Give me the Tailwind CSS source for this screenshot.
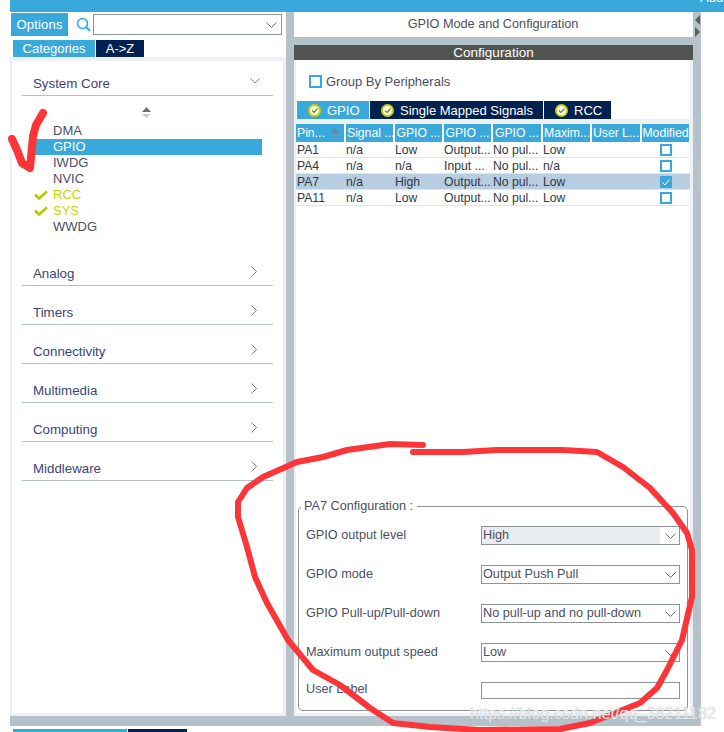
<!DOCTYPE html>
<html>
<head>
<meta charset="utf-8">
<script src="https://cdn.jsdelivr.net/npm/@tailwindcss/browser@4"></script>
</head>
<body class="bg-white">
<div class="relative w-[724px] h-[732px] overflow-hidden bg-white pl-[10px] font-['Liberation_Sans',Arial,sans-serif] text-[13px] text-[#4a4f63]">
  <!-- top bar -->
  <div class="h-[12px] bg-[#39a9dc] relative overflow-hidden">
    <span class="absolute left-[690px] top-[-12px] text-white text-[13px]">Add</span>
  </div>
  <!-- main -->
  <div class="flex h-[704px] w-[691px]">
    <!-- left -->
    <div class="w-[276px] flex flex-col">
      <div class="h-[45px] relative">
        <div class="flex items-center pl-[1px] pt-[1px]">
          <div class="w-[57px] h-[23px] bg-[#39a9dc] text-white flex items-center justify-center tracking-[0.2px]">Options</div>
          <svg class="ml-[8px] w-[15px] h-[15px]" viewBox="0 0 15 15" fill="none" stroke="#39a9dc" stroke-width="1.6"><circle cx="6.5" cy="6.5" r="5"/><path d="M10 10l4 4" stroke-width="2"/></svg>
          <div class="ml-[2px] w-[189px] h-[21px] border border-[#8e9399] bg-white flex items-center justify-end pr-[4px]">
            <svg class="w-[11px] h-[6px]" viewBox="0 0 11 6" fill="none" stroke="#6b7075"><path d="M.5.5l5 5 5-5"/></svg>
          </div>
        </div>
        <div class="flex pl-[3px] mt-[4px] gap-[1px]">
          <div class="w-[82px] h-[17px] bg-[#39a9dc] text-white flex items-center justify-center">Categories</div>
          <div class="w-[48px] h-[17px] bg-[#002050] text-white flex items-center justify-center">A-&gt;Z</div>
        </div>
      </div>
      <div class="flex-1 bg-[#eef0f3] pl-[2px] pr-[3px] pt-[4px] pb-[3px]">
        <div class="h-full bg-white px-[10px] text-[#3a4478] text-[13.3px]">
          <div class="h-[35px] flex items-end justify-between border-b border-[#b6c2ca] pb-[1px] pl-[11px] pr-[13px] relative">
            <span>System Core</span>
            <svg class="w-[10px] h-[6px] mb-[10px]" viewBox="0 0 10 6" fill="none" stroke="#7b8085"><path d="M.5.5l4.5 4.5 4.5-4.5"/></svg>
          </div>
          <div class="h-[151px] relative text-[13px]">
            <div class="flex justify-center pt-[11px] h-[27px] pr-[3px]">
              <svg class="w-[9px] h-[12px]" viewBox="0 0 9 12"><path d="M4.500 0L9 5H0z" fill="#6b7075"/><path d="M4.500 11L9 7H0z" fill="#c5c9cd"/></svg>
            </div>
            <div class="flex flex-col text-[#4a4f63] -ml-[10px]">
              <div class="h-[16px] pl-[41px] leading-[16px]">DMA</div>
              <div class="h-[16px] ml-[23px] w-[227px] pl-[18px] leading-[16px] bg-[#39a9dc] text-white">GPIO</div>
              <div class="h-[16px] pl-[41px] leading-[16px]">IWDG</div>
              <div class="h-[16px] pl-[41px] leading-[16px]">NVIC</div>
              <div class="h-[16px] pl-[22px] flex items-center text-[#c4d600]">
                <svg class="w-[14px] h-[10px] mr-[5px]" viewBox="0 0 14 10" fill="none" stroke="#b4c800" stroke-width="2.500"><path d="M1 4.500l4 4 8-7"/></svg>RCC</div>
              <div class="h-[16px] pl-[22px] flex items-center text-[#c4d600]">
                <svg class="w-[14px] h-[10px] mr-[5px]" viewBox="0 0 14 10" fill="none" stroke="#b4c800" stroke-width="2.500"><path d="M1 4.500l4 4 8-7"/></svg>SYS</div>
              <div class="h-[16px] pl-[41px] leading-[16px]">WWDG</div>
            </div>
          </div>
          <div class="h-[39px] flex items-end justify-between border-b border-[#b6c2ca] pb-[1px] pl-[11px] pr-[16px]"><span>Analog</span><svg class="w-[6px] h-[11px] mb-[7px]" viewBox="0 0 6 11" fill="none" stroke="#7b8085"><path d="M.5.5l5 5-5 5"/></svg></div>
          <div class="h-[39px] flex items-end justify-between border-b border-[#b6c2ca] pb-[1px] pl-[11px] pr-[16px]"><span>Timers</span><svg class="w-[6px] h-[11px] mb-[7px]" viewBox="0 0 6 11" fill="none" stroke="#7b8085"><path d="M.5.5l5 5-5 5"/></svg></div>
          <div class="h-[39px] flex items-end justify-between border-b border-[#b6c2ca] pb-[1px] pl-[11px] pr-[16px]"><span>Connectivity</span><svg class="w-[6px] h-[11px] mb-[7px]" viewBox="0 0 6 11" fill="none" stroke="#7b8085"><path d="M.5.5l5 5-5 5"/></svg></div>
          <div class="h-[39px] flex items-end justify-between border-b border-[#b6c2ca] pb-[1px] pl-[11px] pr-[16px]"><span>Multimedia</span><svg class="w-[6px] h-[11px] mb-[7px]" viewBox="0 0 6 11" fill="none" stroke="#7b8085"><path d="M.5.5l5 5-5 5"/></svg></div>
          <div class="h-[39px] flex items-end justify-between border-b border-[#b6c2ca] pb-[1px] pl-[11px] pr-[16px]"><span>Computing</span><svg class="w-[6px] h-[11px] mb-[7px]" viewBox="0 0 6 11" fill="none" stroke="#7b8085"><path d="M.5.5l5 5-5 5"/></svg></div>
          <div class="h-[39px] flex items-end justify-between border-b border-[#b6c2ca] pb-[1px] pl-[11px] pr-[16px]"><span>Middleware</span><svg class="w-[6px] h-[11px] mb-[7px]" viewBox="0 0 6 11" fill="none" stroke="#7b8085"><path d="M.5.5l5 5-5 5"/></svg></div>
        </div>
      </div>
    </div>
    <!-- separator -->
    <div class="w-[8px] bg-[#b6c2ca]"></div>
    <!-- right -->
    <div class="w-[399px] flex flex-col bg-[#b6c2ca]">
      <div class="h-[25px] bg-white flex items-center justify-center text-[12.7px] pt-[1px] pr-[1px]">GPIO Mode and Configuration</div>
      <div class="h-[8px]"></div>
      <div class="h-[15px] bg-[#525452] text-white flex items-center justify-center text-[13.5px] pt-[1px]">Configuration</div>
      <div class="flex-1 bg-white border-x-2 border-b-3 border-[#eef0f3] border-r-3 flex flex-col relative">
        <div class="h-[41px] flex items-center pl-[13px] pt-[2px]">
          <div class="w-[13px] h-[13px] border-2 border-[#39a9dc] mr-[4px]"></div>
          <span>Group By Peripherals</span>
        </div>
        <div class="flex pl-[1px] gap-[1px] h-[18px] text-[13px]">
          <div class="w-[72px] bg-[#39a9dc] text-white flex items-center pl-[11px] gap-[6px]">
            <svg class="w-[13px] h-[13px]" viewBox="0 0 13 13"><circle cx="6.500" cy="6.500" r="5.500" fill="#fff" stroke="#c4d600" stroke-width="2"/><path d="M4 6.500l2 2 3.500-4" fill="none" stroke="#7a8a20" stroke-width="1.300"/></svg><span class="pt-[1px]">GPIO</span></div>
          <div class="w-[173px] bg-[#002050] text-white flex items-center pl-[11px] gap-[6px]">
            <svg class="w-[13px] h-[13px]" viewBox="0 0 13 13"><circle cx="6.500" cy="6.500" r="5.500" fill="#fff" stroke="#c4d600" stroke-width="2"/><path d="M4 6.500l2 2 3.500-4" fill="none" stroke="#7a8a20" stroke-width="1.300"/></svg><span class="pt-[1px]">Single Mapped Signals</span></div>
          <div class="w-[67px] bg-[#002050] text-white flex items-center pl-[11px] gap-[6px]">
            <svg class="w-[13px] h-[13px]" viewBox="0 0 13 13"><circle cx="6.500" cy="6.500" r="5.500" fill="#fff" stroke="#c4d600" stroke-width="2"/><path d="M4 6.500l2 2 3.500-4" fill="none" stroke="#7a8a20" stroke-width="1.300"/></svg><span class="pt-[1px]">RCC</span></div>
        </div>
        <div class="h-[5px] bg-[#eef0f3] -mr-[1px]"></div>
        <!-- table -->
        <div class="w-[394px] text-[12.2px] text-[#33373f]">
          <div class="grid grid-cols-[48px_47px_47px_47px_48px_47px_48px_47px] gap-x-[2px] h-[18px] text-white text-[12.2px]">
            <div class="bg-[#39a9dc] flex items-center justify-between pl-[1px] pr-[5px]">Pin...<svg class="w-[8px] h-[11px]" viewBox="0 0 8 11"><path d="M4 0l4 5H0z" fill="#6b8899"/><path d="M4 11l4-5H0z" fill="#5a9bc0"/></svg></div>
            <div class="bg-[#39a9dc] flex items-center pl-[1px] whitespace-nowrap">Signal ...</div>
            <div class="bg-[#39a9dc] flex items-center justify-center whitespace-nowrap">GPIO ...</div>
            <div class="bg-[#39a9dc] flex items-center justify-center whitespace-nowrap">GPIO ...</div>
            <div class="bg-[#39a9dc] flex items-center justify-center whitespace-nowrap">GPIO ...</div>
            <div class="bg-[#39a9dc] flex items-center pl-[1px] whitespace-nowrap">Maxim...</div>
            <div class="bg-[#39a9dc] flex items-center pl-[1px] whitespace-nowrap">User L...</div>
            <div class="bg-[#39a9dc] flex items-center justify-center whitespace-nowrap">Modified</div>
          </div>
          <div class="grid grid-cols-[48px_47px_47px_47px_48px_47px_48px_47px] gap-x-[2px] h-[16px] leading-[17px] border-b border-[#e0e4e8]">
            <div class="pl-[1px]">PA1</div><div>n/a</div><div>Low</div><div class="whitespace-nowrap">Output...</div><div class="whitespace-nowrap">No pul...</div><div>Low</div><div></div><div class="flex justify-center items-center pb-[1px]"><div class="w-[12px] h-[12px] border-2 border-[#39a9dc]"></div></div>
          </div>
          <div class="grid grid-cols-[48px_47px_47px_47px_48px_47px_48px_47px] gap-x-[2px] h-[16px] leading-[17px] border-b border-[#e0e4e8]">
            <div class="pl-[1px]">PA4</div><div>n/a</div><div>n/a</div><div class="whitespace-nowrap">Input ...</div><div class="whitespace-nowrap">No pul...</div><div>n/a</div><div></div><div class="flex justify-center items-center pb-[1px]"><div class="w-[12px] h-[12px] border-2 border-[#39a9dc]"></div></div>
          </div>
          <div class="grid grid-cols-[48px_47px_47px_47px_48px_47px_48px_47px] gap-x-[2px] h-[16px] leading-[17px] bg-[#b7cde2] border-b border-[#e0e4e8]">
            <div class="pl-[1px]">PA7</div><div>n/a</div><div>High</div><div class="whitespace-nowrap">Output...</div><div class="whitespace-nowrap">No pul...</div><div>Low</div><div></div><div class="flex justify-center items-center pb-[1px]"><div class="w-[12px] h-[12px] bg-[#39a9dc] flex items-center justify-center"><svg class="w-[8px] h-[7px]" viewBox="0 0 8 7" fill="none" stroke="#fff"><path d="M.5 3.500l2.500 2.500 4.500-5.500"/></svg></div></div>
          </div>
          <div class="grid grid-cols-[48px_47px_47px_47px_48px_47px_48px_47px] gap-x-[2px] h-[16px] leading-[17px] border-b border-[#e0e4e8]">
            <div class="pl-[1px]">PA11</div><div>n/a</div><div>Low</div><div class="whitespace-nowrap">Output...</div><div class="whitespace-nowrap">No pul...</div><div>Low</div><div></div><div class="flex justify-center items-center pb-[1px]"><div class="w-[12px] h-[12px] border-2 border-[#39a9dc]"></div></div>
          </div>
        </div>
        <!-- form -->
        <fieldset class="absolute left-[2px] top-[438px] w-[390px] h-[213px] border border-[#8e9399] rounded-[5px] px-[7px] text-[12.7px]">
          <legend class="ml-[-5px] px-[3px] leading-[15px] pr-[4px] pt-[1px]">PA7 Configuration :</legend>
          <div class="flex flex-col pt-[2px]">
            <div class="h-[39px] flex items-center justify-between"><span>GPIO output level</span>
              <div class="w-[199px] h-[19px] border border-[#8e9399] flex items-center justify-between pl-[1px] pr-[3px] bg-[linear-gradient(to_right,#eaedf0_90.5%,#fff_90.5%)]"><span>High</span><svg class="w-[11px] h-[6px]" viewBox="0 0 11 6" fill="none" stroke="#6b7075"><path d="M.5.5l5 5 5-5"/></svg></div></div>
            <div class="h-[39px] flex items-center justify-between"><span>GPIO mode</span>
              <div class="w-[199px] h-[19px] border border-[#8e9399] flex items-center justify-between pl-[1px] pr-[3px]"><span>Output Push Pull</span><svg class="w-[11px] h-[6px]" viewBox="0 0 11 6" fill="none" stroke="#6b7075"><path d="M.5.5l5 5 5-5"/></svg></div></div>
            <div class="h-[39px] flex items-center justify-between"><span>GPIO Pull-up/Pull-down</span>
              <div class="w-[199px] h-[19px] border border-[#8e9399] flex items-center justify-between pl-[1px] pr-[3px]"><span>No pull-up and no pull-down</span><svg class="w-[11px] h-[6px]" viewBox="0 0 11 6" fill="none" stroke="#6b7075"><path d="M.5.5l5 5 5-5"/></svg></div></div>
            <div class="h-[39px] flex items-center justify-between"><span>Maximum output speed</span>
              <div class="w-[199px] h-[19px] border border-[#8e9399] flex items-center justify-between pl-[1px] pr-[3px]"><span>Low</span><svg class="w-[11px] h-[6px]" viewBox="0 0 11 6" fill="none" stroke="#6b7075"><path d="M.5.5l5 5 5-5"/></svg></div></div>
            <div class="h-[39px] flex items-center justify-between pb-[3px]"><span>User Label</span>
              <div class="w-[199px] h-[17px] border border-[#8e9399]"></div></div>
          </div>
        </fieldset>
      </div>
    </div>
    <div class="w-[8px] bg-[#b6c2ca] flex flex-col items-center pt-[3px] gap-[2px]">
      <svg class="w-[5px] h-[10px]" viewBox="0 0 5 10"><path d="M5 0v10L0 5z" fill="#5a5f63"/></svg>
      <svg class="w-[5px] h-[10px]" viewBox="0 0 5 10"><path d="M0 0v10l5-5z" fill="#5a5f63"/></svg>
    </div>
  </div>
  <div class="h-[10px] w-[691px] bg-[#b6c2ca]"></div>
  <div class="flex pl-[3px] mt-[3px] gap-[1px] h-[3px]">
    <div class="w-[114px] bg-[#39a9dc]"></div>
    <div class="w-[59px] bg-[#002050]"></div>
  </div>

  <!-- hand-drawn annotations -->
  <svg class="absolute left-0 top-0 pointer-events-none" width="724" height="732" viewBox="0 0 724 732" fill="none" stroke="#fb3538" stroke-linecap="round" stroke-linejoin="round">
    <path stroke-width="8" d="M43 113 L36 125 L33 136 L30 168 L22 163 L17 150 L12 139"/>
    <path stroke-width="6" d="M423 445 L390 444 L347 450 L323 457 L297 462 L263 477 L247 488 L238 502 L238 517 L247 547 L255 577 L267 603 L288 640 L313 670 L340 685 L370 708 L393 723 L430 727 L480 730 L560 729 L590 723 L640 703 L657 688 L667 670 L682 640 L692 597 L692 550 L687 533 L673 513 L650 488 L623 467 L597 452 L563 450 L497 450 L463 452 L413 452"/>
  </svg>
  <div class="absolute left-[470px] top-[703px] text-[16.2px] leading-[20px] whitespace-nowrap text-white/70 [text-shadow:0_0_1px_#aab2b9]">https://blog.csdn.net/qq_38211182</div>
</div>
</body>
</html>
